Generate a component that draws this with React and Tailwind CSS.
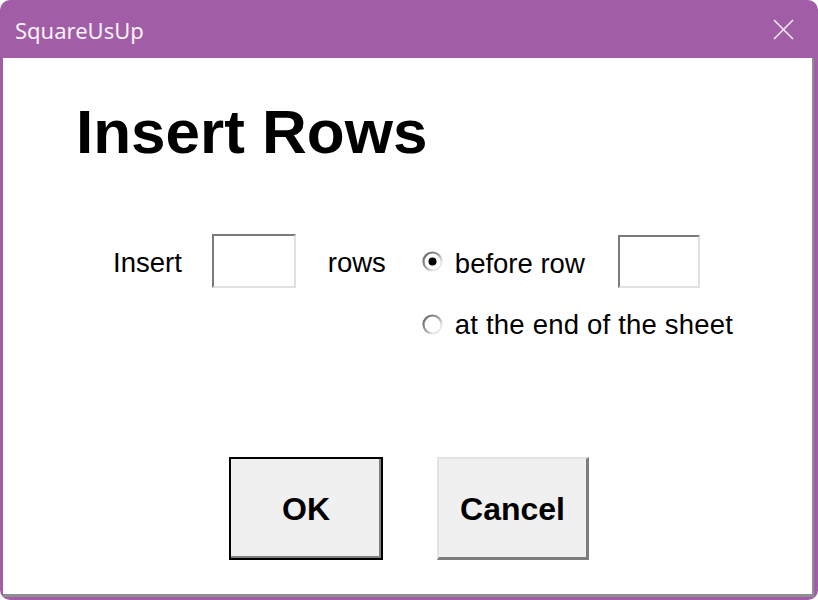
import React from "react";

function Radio({ checked }) {
  return (
    <svg width="21" height="21" viewBox="0 0 21 21" className="shrink-0">
      <defs>
        <linearGradient id={checked ? "rg1" : "rg2"} x1="0" y1="0" x2="1" y2="1">
          <stop offset="0" stopColor="#5e5e5e" />
          <stop offset="0.45" stopColor="#9a9a9a" />
          <stop offset="0.75" stopColor="#e4e4e4" />
          <stop offset="1" stopColor="#f4f4f4" />
        </linearGradient>
      </defs>
      <circle cx="10.5" cy="10.5" r="9" fill="#ffffff" stroke={`url(#${checked ? "rg1" : "rg2"})`} strokeWidth="2.2" />
      {checked && <circle cx="10.5" cy="10.5" r="4" fill="#000000" />}
    </svg>
  );
}

function Box({ w, h }) {
  return (
    <div
      className={`${w} ${h} bg-white border-t-2 border-l-2 border-r-2 border-b-2 border-t-[#7a7a7a] border-l-[#7a7a7a] border-r-[#e0e0e0] border-b-[#e0e0e0] shrink-0`}
    />
  );
}

export default function App() {
  const font = { fontFamily: '"Liberation Sans", Arial, sans-serif' };
  return (
    <div className="w-[818px] h-[600px] bg-[#a15ea6] rounded-[10px] flex flex-col overflow-hidden">
      <div className="h-[58px] shrink-0 flex items-center justify-between pl-[15px] pr-[24px]">
        <span
          className="text-[22px] text-[#f8f2f8] leading-none pt-[2px]"
          style={{ fontFamily: '"Noto Sans", "Open Sans", sans-serif' }}
        >
          SquareUsUp
        </span>
        <svg width="21" height="21" viewBox="0 0 21 21">
          <path d="M1 1 L20 20 M20 1 L1 20" stroke="#f4eaf4" strokeWidth="1.6" />
        </svg>
      </div>
      <div
        className="flex-1 ml-[3px] mr-[4px] mb-[3px] bg-white border-r-2 border-b-[3px] border-[#8e8e8e] flex flex-col pt-[43px] text-black"
        style={font}
      >
        <h1 className="pl-[73px] text-[62px] font-bold leading-none">Insert Rows</h1>

        <div className="mt-[71px] pl-[110px] flex items-start text-[27.5px]">
          <div className="flex items-center h-[54px]">
            <span className="mt-[4px]">Insert</span>
            <div className="ml-[30px]">
              <Box w="w-[84px]" h="h-[54px]" />
            </div>
            <span className="ml-[32px] mt-[4px]">rows</span>
          </div>
          <div className="flex flex-col ml-[36px]">
            <div className="flex items-center h-[54px]">
              <Radio checked />
              <span className="ml-[12px] mt-[5px]">before row</span>
              <div className="ml-[33px] mt-[1px]">
                <Box w="w-[82px]" h="h-[53px]" />
              </div>
            </div>
            <div className="flex items-center h-[30px] mt-[21px]">
              <Radio />
              <span className="ml-[12px] mt-[2px] tracking-[0.2px]">at the end of the sheet</span>
            </div>
          </div>
        </div>

        <div className="mt-[118px] pl-[226px] flex gap-[54px]">
          <button className="w-[154px] h-[103px] bg-[#f0f0f0] border-2 border-black shadow-[inset_-2px_-2px_0_#808080] text-[32px] font-bold flex items-center justify-center">
            OK
          </button>
          <button className="w-[152px] h-[103px] bg-[#f0f0f0] border-t-2 border-l-2 border-r-[3px] border-b-[3px] border-t-[#e3e3e3] border-l-[#e3e3e3] border-r-[#7d7d7d] border-b-[#7d7d7d] text-[32px] font-bold flex items-center justify-center pt-[2px]">
            Cancel
          </button>
        </div>
      </div>
    </div>
  );
}
